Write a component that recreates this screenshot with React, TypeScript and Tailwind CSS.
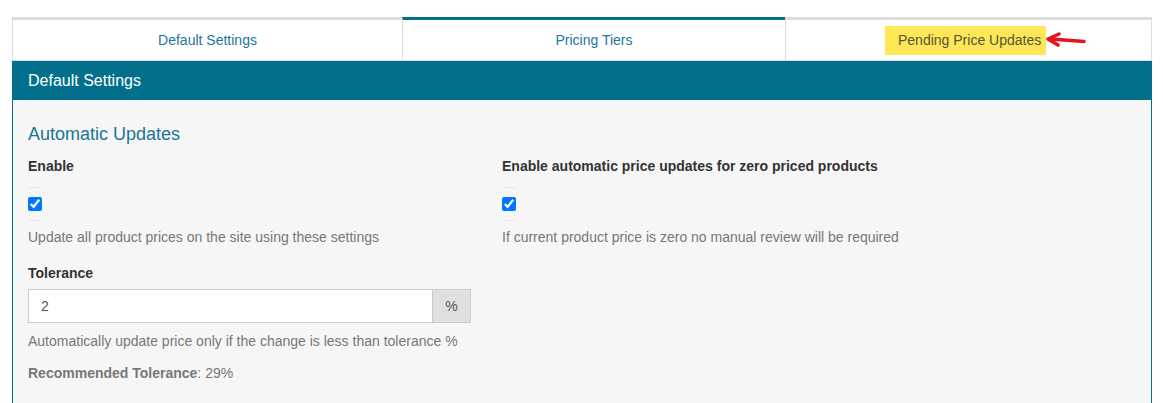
import React from "react";

const tabs = [
  { label: "Default Settings", w: "w-[391px]", active: false },
  { label: "Pricing Tiers", w: "w-[384px]", active: true },
  { label: "Pending Price Updates", w: "flex-1", active: false, marked: true },
];

function Arrow() {
  return (
    <svg width="42" height="16" viewBox="0 0 42 16">
      <path d="M38 9.5 L5 7" stroke="#e8141a" strokeWidth="3.5" strokeLinecap="round" fill="none" />
      <path d="M13 2 L2 7 L12 13" stroke="#e8141a" strokeWidth="3.5" strokeLinecap="round" strokeLinejoin="round" fill="none" />
    </svg>
  );
}

function Check() {
  return (
    <div className="w-[14px] border-y border-[#ebebeb] py-[9px] mt-[11px]">
      <input type="checkbox" defaultChecked className="block w-[14px] h-[14px] m-0 accent-[#0075ff]" />
    </div>
  );
}

export default function App() {
  return (
    <div className="w-[1163px] h-[403px] bg-white pt-[17px] px-[12px] font-['Liberation_Sans',Arial,sans-serif] text-[14px] overflow-hidden">
      <div className="w-[1140px]">
        {/* tabs */}
        <div className="flex h-[44px]">
          {tabs.map((t) => (
            <div
              key={t.label}
              className={
                t.w +
                " flex items-center bg-white border border-[#ddd] border-t-[3px] -ml-px first:ml-0 " +
                (t.marked ? "justify-start " : "justify-center ") +
                (t.active ? "border-t-[#02708b]" : "")
              }
            >
              {t.marked ? (
                <div className="flex items-center ml-[99px]">
                  <span className="bg-[#fde757] text-[#55553a] pl-[13px] pr-[5px] h-[29px] flex items-center">{t.label}</span>
                  <Arrow />
                </div>
              ) : (
                <span className="text-[#23769b]">{t.label}</span>
              )}
            </div>
          ))}
        </div>

        {/* panel */}
        <div className="border-x border-[#02708b] bg-[#f6f6f6] h-[400px]">
          <div className="bg-[#02708b] h-[39px] flex items-center px-[15px] text-white text-[16px]">Default Settings</div>
          <div className="px-[15px] pt-[23px]">
            <h3 className="text-[18px] text-[#1a7597] leading-[22px]">Automatic Updates</h3>
            <div className="grid grid-cols-[474px_1fr] mt-[11px]">
              <div>
                <div className="font-bold text-[#333] leading-[20px]">Enable</div>
                <Check />
                <div className="text-[#777] leading-[20px] mt-[6px]">Update all product prices on the site using these settings</div>
              </div>
              <div>
                <div className="font-bold text-[#333] leading-[20px]">Enable automatic price updates for zero priced products</div>
                <Check />
                <div className="text-[#777] leading-[20px] mt-[6px]">If current product price is zero no manual review will be required</div>
              </div>
            </div>
            <div className="font-bold text-[#333] leading-[20px] mt-[16px]">Tolerance</div>
            <div className="flex w-[443px] h-[34px] mt-[6px]">
              <div className="flex-1 bg-white border border-[#ccc] flex items-center px-[12px] text-[#555]">2</div>
              <div className="w-[38px] bg-[#e0e0e0] border border-l-0 border-[#ccc] flex items-center justify-center text-[#555]">%</div>
            </div>
            <div className="text-[#777] leading-[20px] mt-[8px]">Automatically update price only if the change is less than tolerance %</div>
            <div className="text-[#777] leading-[20px] mt-[12px]">
              <span className="font-bold">Recommended Tolerance</span>: 29%
            </div>
          </div>
        </div>
      </div>
    </div>
  );
}
